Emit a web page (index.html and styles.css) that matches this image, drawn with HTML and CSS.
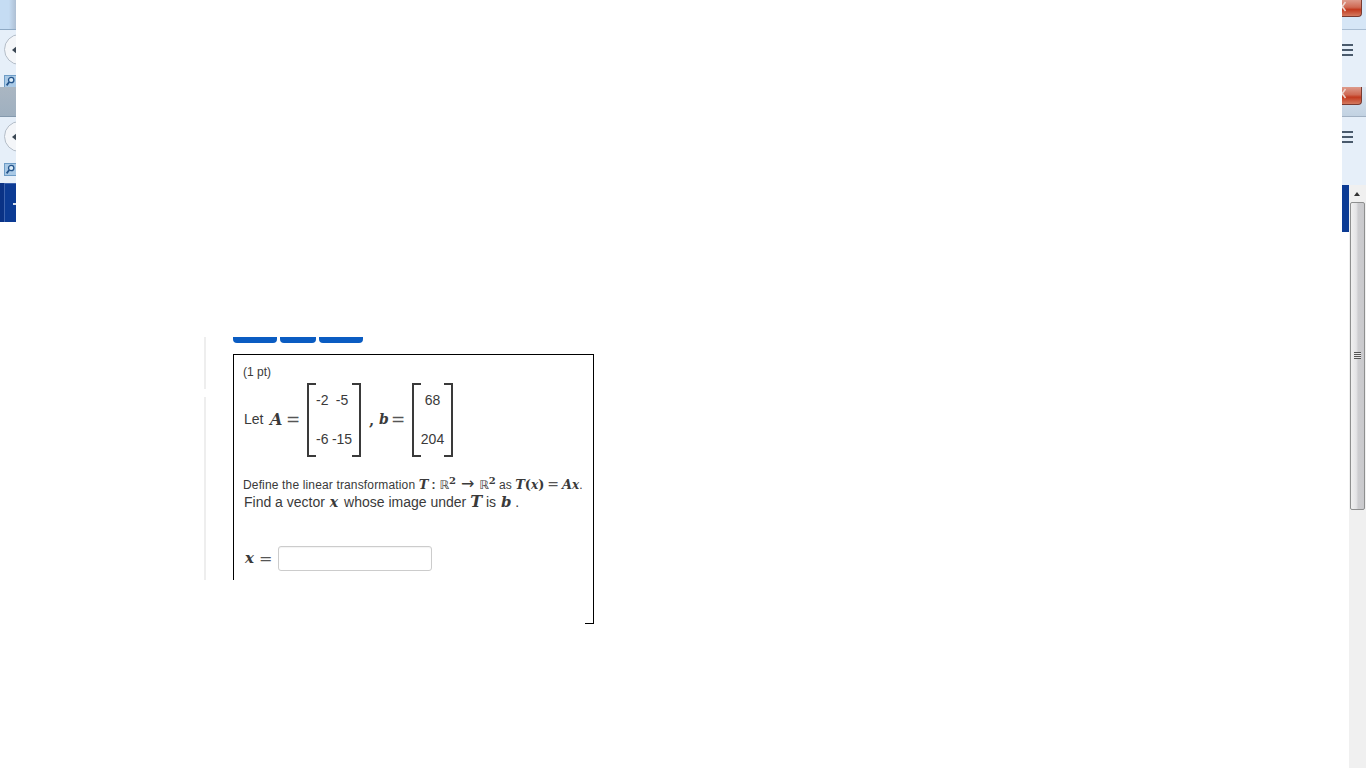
FILE: index.html
```html
<!DOCTYPE html>
<html lang="en">
<head>
<meta charset="utf-8">
<title>Linear transformation problem</title>
<link rel="stylesheet" href="styles.css">
</head>
<body>
<aside class="chrome-left">
  <div class="title-band title-light"></div>
  <div class="nav-band">
    <div class="back-button"><span class="back-arrow"></span></div>
    <svg class="lens" viewBox="0 0 12 13"><rect x="0.5" y="0.5" width="14" height="12" fill="#a9c9e6" stroke="#6d9cc6"/><circle cx="7.2" cy="5" r="2.7" fill="#dcecf8" stroke="#24558c" stroke-width="1.3"/><path d="M5.2 7 L2.6 10.4" stroke="#24558c" stroke-width="1.8"/></svg>
  </div>
  <div class="title-band title-grey"></div>
  <div class="nav-band nav-band-second">
    <div class="back-button"><span class="back-arrow"></span></div>
    <svg class="lens" viewBox="0 0 12 13"><rect x="0.5" y="0.5" width="14" height="12" fill="#a9c9e6" stroke="#6d9cc6"/><circle cx="7.2" cy="5" r="2.7" fill="#dcecf8" stroke="#24558c" stroke-width="1.3"/><path d="M5.2 7 L2.6 10.4" stroke="#24558c" stroke-width="1.8"/></svg>
  </div>
  <div class="navy-band"><span class="navy-arrow"></span></div>
</aside>

<main class="page">
  <div class="rail">
    <div class="rail-top"></div>
    <div class="rail-bottom"></div>
  </div>
  <div class="content">
    <div class="tabs">
      <span class="tab tab-a"></span>
      <span class="tab tab-b"></span>
      <span class="tab tab-c"></span>
    </div>
    <section class="problem">
      <p class="points">(1 pt)</p>
      <div class="matrices">
        <span class="let">Let</span>
        <i class="math var-a">A</i>
        <span class="eq">=</span>
        <div class="matrix matrix-a">
          <span class="cell">-2</span><span class="cell">-5</span>
          <span class="cell">-6</span><span class="cell">-15</span>
        </div>
        <b class="comma">,</b>
        <i class="math var-b">b</i>
        <span class="eq">=</span>
        <div class="matrix matrix-b">
          <span class="cell">68</span>
          <span class="cell">204</span>
        </div>
      </div>
      <p class="define"><span class="define-text">Define the linear transformation </span><i class="math">T</i><span class="colon">:</span><span class="reals">ℝ<sup>2</sup></span><span class="arrow">→</span><span class="reals">ℝ<sup>2</sup></span><span class="define-as"> as </span><i class="math">T</i><span class="paren">(</span><i class="math math-x">x</i><span class="paren">)</span><span class="eq-small">=</span><i class="math">A</i><i class="math math-x">x</i>.</p>
      <p class="find">Find a vector <i class="math math-x">x</i> whose image under <i class="math math-big">T</i> is <i class="math math-big math-b">b</i> .</p>
      <div class="answer">
        <i class="math">x</i>
        <span class="eq">=</span>
        <input class="answer-input" type="text" aria-label="x">
      </div>
      <div class="mask"></div>
    </section>
  </div>
</main>

<aside class="chrome-right">
  <div class="title-band title-light"><span class="close"><svg class="close-x" viewBox="0 0 5 13"><path d="M-3 2 L3.5 11 M3.5 2 L-3 11" stroke="#ecd6cf" stroke-width="1.6" fill="none"/></svg></span></div>
  <div class="menu-band"><span class="menu-icon"></span></div>
  <div class="title-band title-grey"><span class="close close-second"><svg class="close-x" viewBox="0 0 5 13"><path d="M-3 2 L3.5 11 M3.5 2 L-3 11" stroke="#ecd6cf" stroke-width="1.6" fill="none"/></svg></span></div>
  <div class="menu-band menu-band-second"><span class="menu-icon"></span></div>
  <div class="lower">
    <div class="navy-strip"></div>
    <div class="scrollbar">
      <div class="scroll-up"><span class="up-arrow"></span></div>
      <div class="thumb"><span class="grip"></span></div>
    </div>
  </div>
</aside>
</body>
</html>
```
FILE: styles.css
```css
* { box-sizing: border-box; }
html, body { margin: 0; padding: 0; }
body {
  display: flex;
  width: 1366px;
  height: 768px;
  overflow: hidden;
  background: #fff;
  font-family: "Liberation Sans", Arial, sans-serif;
  color: #3a3a3a;
}

/* left chrome fragment */
.chrome-left { width: 16px; height: 222px; flex: none; overflow: hidden; }
.title-band { height: 29px; }
.chrome-left .title-light { background: linear-gradient(90deg, #c5dcf3 0, #c5dcf3 55%, #aebfd3 100%); height: 30px; border-bottom: 1px solid #8ea9c4; }
.chrome-left .title-grey { background: linear-gradient(180deg, #aab6c2, #9fb0c0); height: 30px; border-bottom: 1px solid #8499ad; }
.nav-band { height: 57px; background: #e6eff9; padding: 4px 0 0 4px; overflow: hidden; }
.nav-band-second { height: 66px; padding-top: 4px; }
.back-button {
  width: 31px; height: 31px;
  border: 1px solid #b4bdc8; border-radius: 50%;
  background: #f4f6f9;
  padding: 11px 0 0 7px;
}
.back-arrow { display: block; width: 0; height: 0; border: 4px solid transparent; border-right: 5px solid #3b4754; border-left: 0; }
.lens { display: block; width: 12px; height: 13px; margin-top: 10px; }
.nav-band-second .lens { margin-top: 10px; height: 15px; }
.navy-band { height: 39px; background: #0c3b94; padding: 20px 0 0 9px; border-left: 4px solid #0a3285; box-shadow: inset 1px 1px 0 #3d63ad; }
.navy-arrow { display: block; width: 7px; height: 2px; background: #d8e0ee; }

/* page */
.page { flex: 1; display: flex; padding: 337px 0 0 188px; min-width: 0; }
.rail { width: 2px; flex: none; margin-right: 27px; }
.rail-top { height: 52px; background: #eeeeee; }
.rail-bottom { height: 183px; margin-top: 8px; background: #eeeeee; }
.content { width: 361px; flex: none; }
.tabs { display: flex; gap: 3px; height: 6px; margin-left: 0; }
.tab { display: block; height: 6px; background: #0a5cc2; border-radius: 0 0 4px 4px; }
.tab-a { width: 44px; }
.tab-b { width: 36px; }
.tab-c { width: 44px; }

.problem {
  position: relative;
  margin-top: 11px;
  width: 361px;
  height: 270px;
  border: 1px solid #000;
  padding: 10px 0 0 9px;
}
.mask { position: absolute; left: -1px; bottom: -1px; width: 352px; height: 44px; background: #fff; z-index: 0; }
.problem p { margin: 0; }
.points { font-size: 12px; line-height: 15px; }
.matrices { display: flex; align-items: center; height: 74px; margin-top: 3px; font-size: 14px; padding-left: 1px; }
.let { width: 25px; padding-bottom: 2px; }
.math { font-family: "DejaVu Serif", "Liberation Serif", serif; font-style: italic; font-weight: 700; color: #3a3a3a; }
.var-a { font-size: 16px; width: 17px; padding-left: 1px; padding-bottom: 2px; }
.var-b { font-size: 14px; width: 12px; padding-bottom: 2px; }
.eq { font-family: "DejaVu Sans", sans-serif; font-weight: 400; font-size: 17px; width: 21px; color: #555; padding-bottom: 2px; }
.matrix {
  display: grid;
  row-gap: 21px;
  height: 74px;
  padding-bottom: 2px;
  align-content: center;
  position: relative;
  border-left: 2px solid #3a3a3a;
  border-right: 2px solid #3a3a3a;
  font-size: 14px;
  line-height: 18px;
}
.matrix::before, .matrix::after {
  content: "";
  position: absolute;
  top: 0; bottom: 0;
  width: 7px;
  border-top: 2px solid #3a3a3a;
  border-bottom: 2px solid #3a3a3a;
}
.matrix::before { left: 0; }
.matrix::after { right: 0; }
.cell { text-align: center; }
.matrix-a { width: 54px; grid-template-columns: 14px 24px; column-gap: 0; padding-left: 7px; }
.matrix-a .cell:nth-child(odd) { text-align: left; }
.matrix-b { width: 41px; grid-template-columns: 1fr; }
.comma { font-family: "DejaVu Serif", serif; font-size: 15px; width: 18px; padding-left: 8px; }
.define { font-size: 12px; line-height: 16px; margin-top: 19px !important; display: flex; align-items: baseline; white-space: pre; }
.define-text { letter-spacing: 0.15px; }
.define-as { letter-spacing: 0; }
.define .math { font-size: 13px; }
.define .math-x { font-size: 12px; }
.colon { font-weight: 700; padding: 0 4px 0 3px; }
.reals { font-family: "DejaVu Sans", sans-serif; font-size: 12px; }
.reals sup { font-family: "DejaVu Serif", serif; font-weight: 700; font-size: 10px; line-height: 0; }
.arrow { font-family: "DejaVu Sans", sans-serif; font-size: 16px; padding: 0 5px; }
.paren { font-family: "DejaVu Serif", serif; font-size: 13px; font-weight: 700; }
.eq-small { font-family: "DejaVu Sans", sans-serif; font-size: 14px; padding: 0 3px; color: #555; }
.find { font-size: 14px; line-height: 18px; height: 18px; padding-left: 1px; margin-top: 0 !important; white-space: nowrap; }
.find .math { line-height: 0; }
.find .math-x { font-size: 14px; margin: 0 2px 0 1px; }
.find .math-big { font-size: 16px; }
.find .math-b { font-size: 15px; margin-left: 1px; }
.answer { display: flex; align-items: center; height: 26px; margin-top: 34px; padding-left: 2px; position: relative; z-index: 1; }
.answer .math { font-size: 15px; width: 14px; }
.answer .eq { font-size: 16px; width: 19px; padding-bottom: 0; }
.answer-input { display: block; width: 154px; height: 25px; border: 1px solid #ccc; border-radius: 3px; background: #fff; padding: 0; box-shadow: inset 0 1px 1px rgba(0,0,0,.05); }

/* right chrome fragment */
.chrome-right { width: 24px; flex: none; display: flex; flex-direction: column; height: 768px; }
.chrome-right .title-band { padding-right: 4px; }
.chrome-right .title-light { background: #d6e6f6; height: 30px; border-bottom: 1px solid #a9bdd2; }
.chrome-right .title-grey { background: linear-gradient(180deg, #dbe6f1 0, #c2d2e2 100%); height: 30px; border-bottom: 1px solid #a0b0c2; }
.close { display: block; height: 17px; background: linear-gradient(180deg, #dd9b8c 0, #cf6a54 45%, #c23a1f 60%, #d47a5f 100%); border: 1px solid #7a3a30; border-top: 0; border-left: 0; border-radius: 0 0 4px 0; }
.close-second { height: 18px; margin-top: 0; }
.close-x { display: block; width: 5px; height: 13px; }
.menu-band { height: 57px; background: #e6eff9; padding: 14px 0 0 0; }
.menu-band-second { height: 68px; }
.menu-icon { display: block; width: 11px; height: 12px; border-top: 2px solid #4a5a6c; border-bottom: 2px solid #4a5a6c; position: relative; }
.menu-icon::after { content: ""; position: absolute; left: 0; right: 0; top: 3px; height: 2px; background: #4a5a6c; }
.lower { flex: 1; display: flex; min-height: 0; }
.navy-strip { width: 7px; height: 47px; background: #0c3b94; }
.scrollbar { width: 17px; background: #f0f0f0; }
.scroll-up { height: 17px; padding: 7px 0 0 5px; }
.up-arrow { display: block; width: 0; height: 0; border-left: 3.5px solid transparent; border-right: 3.5px solid transparent; border-bottom: 4px solid #333; }
.thumb {
  width: 15px; height: 308px; margin-left: 1px;
  border: 1px solid #8e8f8f; border-radius: 2px;
  background: linear-gradient(90deg, #f0f0f0 0, #e4e4e6 40%, #cdcdd0 55%, #c9c9cc 100%);
  padding-top: 149px; padding-left: 3px;
}
.grip { display: block; width: 7px; height: 7px; background: repeating-linear-gradient(180deg, #555 0, #555 1px, #e8e8e8 1px, #e8e8e8 2px); }
```
